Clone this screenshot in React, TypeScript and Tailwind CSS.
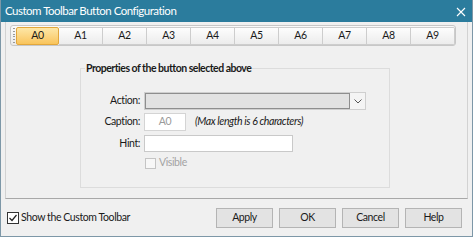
import React from "react";

const tabs = ["A0", "A1", "A2", "A3", "A4", "A5", "A6", "A7", "A8", "A9"];

export default function App() {
  return (
    <div
      className="w-[474px] h-[240px] bg-white overflow-hidden text-[#1a1a1a]"
      style={{ fontFamily: 'Lato, "Noto Sans", sans-serif' }}
    >
      <div className="w-[473px] h-[237px] flex flex-col bg-[#f0f0f0] border-l border-r border-b border-[#7d97a7]">
        {/* Title bar */}
        <div className="h-[22px] shrink-0 bg-[#2b7c9d] flex items-center justify-between pl-[4px] pr-[6px]">
          <span className="text-white text-[11.5px] tracking-[-0.5px] leading-none">Custom Toolbar Button Configuration</span>
          <svg width="10" height="10" viewBox="0 0 10 10" className="mt-[1px]">
            <path d="M1 1 L9 9 M9 1 L1 9" stroke="#ffffff" strokeWidth="1.1" />
          </svg>
        </div>

        {/* Content */}
        <div className="flex-1 flex flex-col px-[4px] text-[10.5px] tracking-[-0.4px]">
          <div className="h-[177px] border-l border-r border-b border-[#d2d2d2] border-b-[#a8a8a8] flex flex-col">
            {/* Tab bar */}
            <div className="ml-[4px] mt-[3px] w-[446px] h-[21px] rounded-[3px] border border-[#c7c7c7] bg-gradient-to-b from-[#fafafa] to-[#eaeaea] flex items-center pl-[2px]">
              <div className="w-[3px] h-[15px] flex flex-col justify-between mr-[1px]">
                {[0, 1, 2, 3, 4, 5].map((i) => (
                  <div key={i} className="w-[2px] h-[1px] bg-[#9a9a9a]" />
                ))}
              </div>
              <div className="flex h-[18px]">
                {tabs.map((t, i) => (
                  <div
                    key={t}
                    className={
                      i === 0
                        ? "w-[43px] h-[18px] flex items-center justify-center rounded-[2px] border border-[#e2a73c] bg-gradient-to-b from-[#fde7a6] to-[#f9c45a]"
                        : "w-[44px] h-[18px] flex items-center justify-center border border-[#cdcdcd] border-l-0 bg-gradient-to-b from-[#fdfdfd] to-[#ececec] last:rounded-r-[2px]"
                    }
                  >
                    {t}
                  </div>
                ))}
              </div>
            </div>

            {/* Group box */}
            <fieldset className="ml-[74px] mt-[15px] w-[310px] h-[127px] border border-[#dcdcdc] pl-0">
              <legend className="ml-[4px] px-[1px] font-bold leading-[14px] tracking-[-0.5px]">
                Properties of the button selected above
              </legend>
              <div className="mt-[17px] flex flex-col">
                <div className="flex items-center h-[18px]">
                  <span className="w-[59px] text-right">Action:</span>
                  <div className="ml-[4px] w-[222px] h-[18px] border border-[#cfcfcf] bg-[#f4f4f4] flex">
                    <div className="w-[205px] h-[16px] border border-[#8e8e8e] bg-[#e2e2e2]" />
                    <div className="flex-1 flex items-center justify-center">
                      <svg width="8" height="5" viewBox="0 0 8 5">
                        <path d="M0.5 0.5 L4 4 L7.5 0.5" fill="none" stroke="#555" strokeWidth="1" />
                      </svg>
                    </div>
                  </div>
                </div>
                <div className="flex items-center h-[18px] mt-[3px]">
                  <span className="w-[59px] text-right">Caption:</span>
                  <div className="ml-[4px] w-[42px] h-[18px] border border-[#d4d4d4] bg-white flex items-center justify-center text-[#9a9a9a]">
                    A0
                  </div>
                  <span className="ml-[9px] italic">(Max length is 6 characters)</span>
                </div>
                <div className="flex items-center h-[17px] mt-[4px]">
                  <span className="w-[59px] text-right">Hint:</span>
                  <div className="ml-[4px] w-[149px] h-[17px] border border-[#c9c9c9] bg-white" />
                </div>
                <div className="flex items-center h-[12px] mt-[5px]">
                  <div className="ml-[64px] w-[11px] h-[11px] border border-[#c4c4c4] bg-[#f7f7f7]" />
                  <span className="ml-[3px] text-[#a3a3a3]">Visible</span>
                </div>
              </div>
            </fieldset>
          </div>

          {/* Bottom row */}
          <div className="flex-1 flex items-center">
            <div className="ml-[2px] w-[12px] h-[12px] border border-[#333] bg-white flex items-center justify-center">
              <svg width="10" height="10" viewBox="0 0 10 10">
                <path d="M1.5 5 L4 7.5 L8.5 2" fill="none" stroke="#222" strokeWidth="1.2" />
              </svg>
            </div>
            <span className="ml-[2px]">Show the Custom Toolbar</span>
            <div className="ml-auto mr-[6px] flex gap-[6px]">
              {["Apply", "OK", "Cancel", "Help"].map((b) => (
                <div
                  key={b}
                  className="w-[57px] h-[20px] border border-[#b4b4b4] bg-[#e3e3e3] flex items-center justify-center"
                >
                  {b}
                </div>
              ))}
            </div>
          </div>
        </div>
      </div>
    </div>
  );
}
